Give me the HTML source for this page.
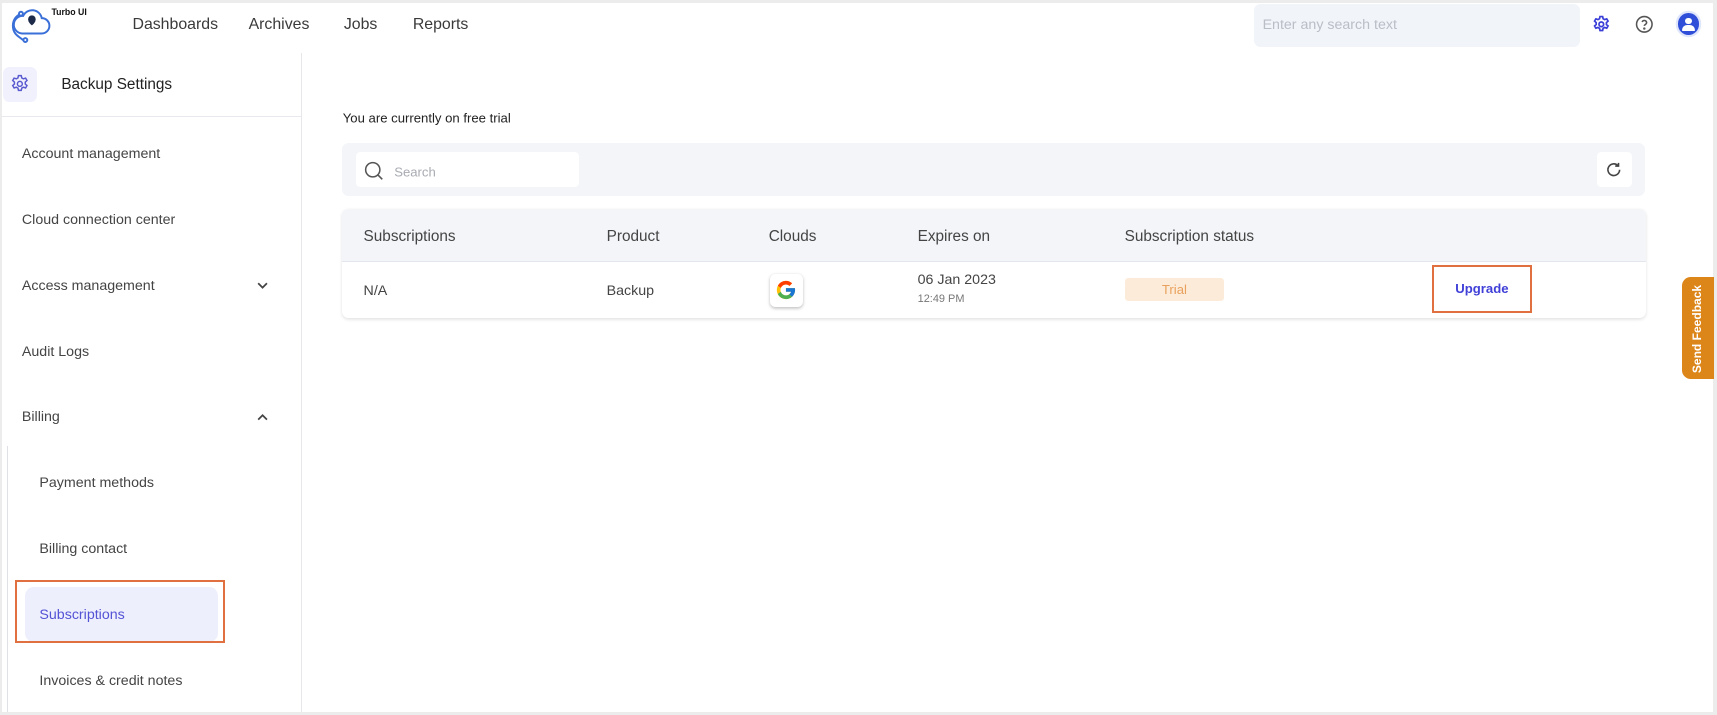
<!DOCTYPE html>
<html><head><meta charset="utf-8"><style>
html,body{margin:0;padding:0;}
body{width:1568px;height:653px;zoom:1.09503;position:relative;overflow:hidden;background:#fff;font-family:"Liberation Sans",sans-serif;color:#333;}
.a{position:absolute;}
.t{position:absolute;white-space:nowrap;transform:translateY(-50%);}
</style></head><body>
<!-- frame -->
<div class="a" style="left:0;top:0;width:1568px;height:3px;background:#ececec"></div>
<div class="a" style="left:0;top:0;width:2px;height:653px;background:#ececec"></div>
<div class="a" style="right:0;top:0;width:4px;height:653px;background:#ececec"></div>
<div class="a" style="left:0;bottom:0;width:1568px;height:3px;background:#ececec"></div>

<!-- logo -->
<svg class="a" style="left:9px;top:5px" width="40" height="34" viewBox="0 0 40 34" fill="none" stroke="#3a6fd8" stroke-width="1.8">
<path d="M11 26 H29 a7 7 0 0 0 0-14 a9 9 0 0 0-17-2 a8 8 0 0 0-1 16z"/>
<path d="M8 9 a12 12 0 0 0 0 20 l4 3" />
<circle cx="10" cy="8" r="1.8"/><circle cx="14" cy="32" r="1.8"/>
<path d="M20 10 a3 3 0 0 1 3 3 c0 3-3 5-3 5 s-3-2-3-5 a3 3 0 0 1 3-3z" fill="#1d2a4a" stroke="#1d2a4a" stroke-width="1"/>
</svg>
<div class="t" style="left:47px;top:11px;font-size:8px;font-weight:bold;color:#111">Turbo UI</div>

<div class="t" style="left:121px;top:23px;font-size:14.5px;color:#3a3a3a">Dashboards</div>
<div class="t" style="left:227px;top:23px;font-size:14.5px;color:#3a3a3a">Archives</div>
<div class="t" style="left:314px;top:23px;font-size:14.5px;color:#3a3a3a">Jobs</div>
<div class="t" style="left:377px;top:23px;font-size:14.5px;color:#3a3a3a">Reports</div>

<div class="a" style="left:1145px;top:4px;width:298px;height:39px;background:#f1f4f9;border-radius:6px"></div>
<div class="t" style="left:1153px;top:23px;font-size:13px;color:#b9bdc6">Enter any search text</div>
<svg class="a" style="left:1454px;top:14px" width="17" height="17" viewBox="0 0 24 24" fill="none" stroke="#3b3fd8" stroke-width="2.2"><path d="M10.3 2h3.4l.6 2.8 2 1.1 2.7-.9 1.7 2.9-2.1 1.9v2.4l2.1 1.9-1.7 2.9-2.7-.9-2 1.1-.6 2.8h-3.4l-.6-2.8-2-1.1-2.7.9-1.7-2.9 2.1-1.9v-2.4L3.3 7.9 5 5l2.7.9 2-1.1z"/><circle cx="12" cy="12" r="3"/></svg>
<svg class="a" style="left:1493px;top:14px" width="17" height="17" viewBox="0 0 24 24" fill="none" stroke="#555" stroke-width="2"><circle cx="12" cy="12" r="10"/><path d="M9.2 9a3 3 0 0 1 5.8 1c0 2-3 2.5-3 4"/><circle cx="12" cy="17.5" r=".6" fill="#555"/></svg>
<div class="a" style="left:1532px;top:12px;width:20px;height:20px;border-radius:50%;background:#2f4fd8;box-shadow:0 0 0 2px #dfe5fb"></div>
<div class="a" style="left:1539px;top:16px;width:6px;height:6px;border-radius:50%;background:#fff"></div>
<div class="a" style="left:1536px;top:23px;width:12px;height:5px;border-radius:6px 6px 1px 1px;background:#fff"></div>

<!-- sidebar -->
<div class="a" style="left:275px;top:48px;width:1px;height:602px;background:#e5e7eb"></div>
<div class="a" style="left:3px;top:61px;width:31px;height:32px;background:#f0f1fc;border-radius:6px"></div>
<svg class="a" style="left:9px;top:68px" width="18" height="18" viewBox="0 0 24 24" fill="none" stroke="#5a5ad0" stroke-width="1.8"><path d="M10.3 2h3.4l.6 2.8 2 1.1 2.7-.9 1.7 2.9-2.1 1.9v2.4l2.1 1.9-1.7 2.9-2.7-.9-2 1.1-.6 2.8h-3.4l-.6-2.8-2-1.1-2.7.9-1.7-2.9 2.1-1.9v-2.4L3.3 7.9 5 5l2.7.9 2-1.1z"/><circle cx="12" cy="12" r="3"/></svg>
<div class="t" style="left:56px;top:78px;font-size:14px;color:#222">Backup Settings</div>
<div class="a" style="left:2px;top:106px;width:273px;height:1px;background:#e8e9ee"></div>

<div class="t" style="left:20px;top:141px;font-size:13px;color:#444">Account management</div>
<div class="t" style="left:20px;top:201px;font-size:13px;color:#444">Cloud connection center</div>
<div class="t" style="left:20px;top:261px;font-size:13px;color:#444">Access management</div>
<svg class="a" style="left:234px;top:256px" width="12" height="10" viewBox="0 0 12 10" fill="none" stroke="#444" stroke-width="1.6"><path d="M2 3l4 4 4-4"/></svg>
<div class="t" style="left:20px;top:321px;font-size:13px;color:#444">Audit Logs</div>
<div class="t" style="left:20px;top:381px;font-size:13px;color:#444">Billing</div>
<svg class="a" style="left:234px;top:376px" width="12" height="10" viewBox="0 0 12 10" fill="none" stroke="#444" stroke-width="1.6"><path d="M2 7l4-4 4 4"/></svg>
<div class="a" style="left:6px;top:407px;width:1px;height:243px;background:#dfe1e6"></div>
<div class="t" style="left:36px;top:441px;font-size:13px;color:#444">Payment methods</div>
<div class="t" style="left:36px;top:501px;font-size:13px;color:#444">Billing contact</div>
<div class="a" style="left:23px;top:536px;width:176px;height:50px;background:#eeeffc;border-radius:8px"></div>
<div class="a" style="left:14px;top:530px;width:188px;height:54px;border:2px solid #e0703f"></div>
<div class="t" style="left:36px;top:562px;font-size:13px;color:#5353d6">Subscriptions</div>
<div class="t" style="left:36px;top:622px;font-size:13px;color:#444">Invoices &amp; credit notes</div>

<!-- main -->
<div class="t" style="left:313px;top:108px;font-size:12px;color:#222">You are currently on free trial</div>
<div class="a" style="left:312px;top:131px;width:1190px;height:48px;background:#f3f5f9;border-radius:6px"></div>
<div class="a" style="left:325px;top:139px;width:204px;height:32px;background:#fff;border-radius:4px"></div>
<svg class="a" style="left:332px;top:147px" width="18" height="18" viewBox="0 0 18 18" fill="none" stroke="#555" stroke-width="1.4"><circle cx="8" cy="8" r="6.5"/><path d="M12.7 12.7l4 4"/></svg>
<div class="t" style="left:360px;top:157px;font-size:12px;color:#a8abb2">Search</div>
<div class="a" style="left:1458px;top:139px;width:32px;height:32px;background:#fff;border-radius:4px"></div>
<svg class="a" style="left:1466px;top:147px" width="16" height="16" viewBox="0 0 24 24" fill="none" stroke="#444" stroke-width="2.2"><path d="M20 12a8 8 0 1 1-2.3-5.7"/><path d="M18.5 2.5v4.5H14"/></svg>

<div class="a" style="left:312px;top:191px;width:1191px;height:99px;border-radius:6px;background:#fff;box-shadow:0 1px 3px rgba(0,0,0,.12);overflow:hidden">
  <div class="a" style="left:0;top:0;width:1191px;height:47px;background:#f3f5f9;border-bottom:1px solid #e3e6ec"></div>
</div>
<div class="t" style="left:332px;top:216px;font-size:14px;color:#444">Subscriptions</div>
<div class="t" style="left:554px;top:216px;font-size:14px;color:#444">Product</div>
<div class="t" style="left:702px;top:216px;font-size:14px;color:#444">Clouds</div>
<div class="t" style="left:838px;top:216px;font-size:14px;color:#444">Expires on</div>
<div class="t" style="left:1027px;top:216px;font-size:14px;color:#444">Subscription status</div>

<div class="t" style="left:332px;top:266px;font-size:13px;color:#444">N/A</div>
<div class="t" style="left:554px;top:266px;font-size:13px;color:#444">Backup</div>
<div class="a" style="left:703px;top:250px;width:30px;height:30px;background:#fff;border-radius:5px;box-shadow:0 1px 3px rgba(0,0,0,.25)"></div>
<svg class="a" style="left:708px;top:255px" width="20" height="20" viewBox="0 0 48 48"><path fill="#FFC107" d="M43.6 20.1H42V20H24v8h11.3C33.7 32.7 29.2 36 24 36c-6.6 0-12-5.4-12-12s5.4-12 12-12c3.1 0 5.8 1.2 7.9 3.1l5.7-5.7C34 6.1 29.3 4 24 4 12.9 4 4 12.9 4 24s8.9 20 20 20 20-8.9 20-20c0-1.3-.1-2.6-.4-3.9z"/><path fill="#FF3D00" d="M6.3 14.7l6.6 4.8C14.7 15.1 19 12 24 12c3.1 0 5.8 1.2 7.9 3.1l5.7-5.7C34 6.1 29.3 4 24 4 16.3 4 9.7 8.3 6.3 14.7z"/><path fill="#4CAF50" d="M24 44c5.2 0 9.9-2 13.4-5.2l-6.2-5.2C29.2 35.1 26.7 36 24 36c-5.2 0-9.6-3.3-11.3-8l-6.5 5C9.5 39.6 16.2 44 24 44z"/><path fill="#1976D2" d="M43.6 20.1H42V20H24v8h11.3c-.8 2.2-2.2 4.2-4.1 5.6l6.2 5.2C37 39.2 44 34 44 24c0-1.3-.1-2.6-.4-3.9z"/></svg>
<div class="t" style="left:838px;top:256px;font-size:13px;color:#444">06 Jan 2023</div>
<div class="t" style="left:838px;top:273px;font-size:10px;color:#777">12:49 PM</div>
<div class="a" style="left:1027px;top:254px;width:91px;height:21px;background:#fdebd9;border-radius:3px;font-size:12px;color:#e8a15c;text-align:center;line-height:21px">Trial</div>
<div class="a" style="left:1308px;top:242px;width:87px;height:40px;border:2px solid #e0703f;font-size:12px;font-weight:bold;color:#4040d8;text-align:center;line-height:40px">Upgrade</div>

<!-- feedback -->
<div class="a" style="left:1536px;top:253px;width:29px;height:93px;background:#dc8518;border-radius:8px 0 0 8px"></div>
<div class="a" style="left:1550px;top:300px;transform:translate(-50%,-50%) rotate(-90deg);font-size:11px;font-weight:bold;color:#fff;white-space:nowrap">Send Feedback</div>
</body></html>
